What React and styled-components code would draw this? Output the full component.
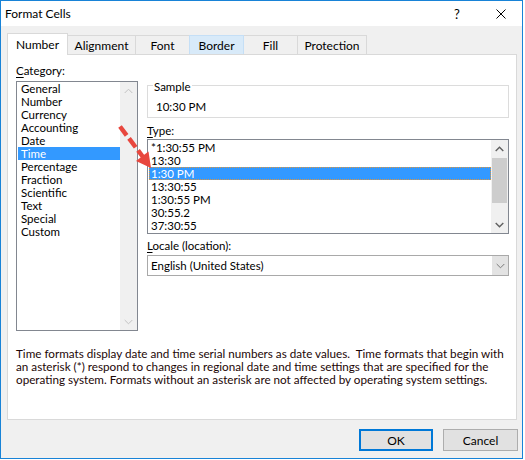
import React from "react";
import styled, { createGlobalStyle } from "styled-components";

const FONT = `Lato, "Noto Sans", "Liberation Sans", sans-serif`;

const Global = createGlobalStyle`
  html, body { margin: 0; padding: 0; background: #fff; }
  body { font-family: ${FONT}; }
`;

const Window = styled.div`
  position: relative;
  width: 523px;
  height: 459px;
  box-sizing: border-box;
  border: 1px solid #1883d7;
  background: #f0f0f0;
  display: flex;
  flex-direction: column;
  font-family: ${FONT};
  font-size: 11.5px;
  color: #000;
`;

const TitleBar = styled.div`
  height: 25px;
  flex: none;
  background: #fff;
  display: flex;
  align-items: center;
  padding-left: 4px;
`;

const Title = styled.div`
  flex: 1;
  font-size: 12px;
  line-height: 16px;
  color: #000;
`;

const TitleButton = styled.div`
  width: ${(p) => p.$w}px;
  height: 25px;
  display: flex;
  align-items: center;
  justify-content: center;
  font-size: 13px;
  color: #000;
`;

const Body = styled.div`
  flex: 1;
  display: flex;
  flex-direction: column;
  padding: 7px 4px 0 6px;
`;

const TabStrip = styled.div`
  display: flex;
  align-items: flex-end;
  height: 21px;
`;

const Tab = styled.div`
  position: relative;
  box-sizing: border-box;
  width: ${(p) => p.$w}px;
  height: ${(p) => (p.$active ? 22 : 19)}px;
  margin-bottom: ${(p) => (p.$active ? -1 : 0)}px;
  margin-left: ${(p) => (p.$first ? 0 : -1)}px;
  z-index: ${(p) => (p.$active ? 2 : p.$hover ? 1 : 0)};
  border: 1px solid ${(p) => (p.$hover ? "#c5dff6" : "#d9d9d9")};
  border-bottom: none;
  background: ${(p) => (p.$active ? "#fff" : p.$hover ? "#d8eaf9" : "#f0f0f0")};
  display: flex;
  align-items: center;
  justify-content: center;
  padding-top: ${(p) => (p.$active ? 0 : 1)}px;
  font-size: 12px;
  line-height: 14px;
  white-space: nowrap;
`;

const Panel = styled.div`
  box-sizing: border-box;
  width: 510px;
  height: 366px;
  border: 1px solid #d9d9d9;
  background: #fff;
  padding: 8px 7px 0 8px;
  display: flex;
  flex-direction: column;
`;

const Columns = styled.div`
  display: grid;
  grid-template-columns: 122px 362px;
  column-gap: 9px;
`;

const Column = styled.div`
  display: flex;
  flex-direction: column;
`;

const Label = styled.div`
  line-height: 15px;
  height: 15px;
  margin-top: ${(p) => p.$mt || 0}px;
  white-space: nowrap;
  u { text-decoration-thickness: 1px; text-underline-offset: 2px; }
`;

const ListBox = styled.div`
  box-sizing: border-box;
  height: ${(p) => p.$h}px;
  margin-top: ${(p) => p.$mt || 0}px;
  border: 1px solid #828790;
  background: #fff;
  display: flex;
`;

const Items = styled.div`
  flex: 1;
  min-width: 0;
  padding: ${(p) => p.$pt || 0}px 0 0 1px;
  display: flex;
  flex-direction: column;
`;

const Row = styled.div`
  box-sizing: border-box;
  height: 13px;
  line-height: 13px;
  padding-left: ${(p) => p.$pl}px;
  white-space: nowrap;
  background: ${(p) => (p.$selected ? "#3399ff" : "transparent")};
  color: ${(p) => (p.$selected ? "#fff" : "#000")};
  outline: ${(p) => (p.$focus ? "1px dotted #e0953a" : "none")};
  outline-offset: -1px;
`;

const ScrollBar = styled.div`
  width: 17px;
  flex: none;
  background: #f0f0f0;
  display: flex;
  flex-direction: column;
`;

const ScrollArrow = styled.div`
  height: 17px;
  flex: none;
  display: flex;
  align-items: center;
  justify-content: center;
`;

const Track = styled.div`
  flex: 1;
  display: flex;
  flex-direction: column;
`;

const Thumb = styled.div`
  height: ${(p) => p.$h}px;
  margin: ${(p) => p.$top}px 1px 0;
  background: #cdcdcd;
`;

const Group = styled.fieldset`
  margin: 13px 0 0;
  padding: 5px 8px 3px;
  border: 1px solid #dcdcdc;
  min-width: 0;
`;

const Legend = styled.legend`
  padding: 4px 1px 0;
  margin-left: -3px;
  line-height: 14px;
`;

const SampleValue = styled.div`
  line-height: 15px;
`;

const Combo = styled.div`
  box-sizing: border-box;
  height: 21px;
  margin-top: 2px;
  border: 1px solid #a9a9a9;
  background: #fff;
  display: flex;
`;

const ComboText = styled.div`
  flex: 1;
  padding-left: 3px;
  line-height: 19px;
  white-space: nowrap;
`;

const ComboButton = styled.div`
  width: 16px;
  background: #e3e3e3;
  display: flex;
  align-items: center;
  justify-content: center;
`;

const Description = styled.div`
  margin-top: 16px;
  font-size: 11.7px;
  line-height: 13px;
  white-space: pre;
  color: #1c0606;
`;

const ButtonRow = styled.div`
  display: flex;
  justify-content: flex-end;
  gap: 10px;
  margin-top: 9px;
`;

const Button = styled.div`
  box-sizing: border-box;
  width: ${(p) => p.$w}px;
  height: 22px;
  background: #e1e1e1;
  border: ${(p) => (p.$default ? "2px solid #0078d7" : "1px solid #adadad")};
  display: flex;
  align-items: center;
  justify-content: center;
  font-size: 12px;
  line-height: 15px;
`;

const Overlay = styled.svg`
  position: absolute;
  left: -1px;
  top: -1px;
  pointer-events: none;
`;

const Chevron = ({ up, color = "#606060", w = 1.4 }) => (
  <svg width="9" height="6" viewBox="0 0 9 6">
    <polyline
      points={up ? "0.7,5 4.5,1.2 8.3,5" : "0.7,1 4.5,4.8 8.3,1"}
      fill="none"
      stroke={color}
      strokeWidth={w}
    />
  </svg>
);

const categories = [
  "General",
  "Number",
  "Currency",
  "Accounting",
  "Date",
  "Time",
  "Percentage",
  "Fraction",
  "Scientific",
  "Text",
  "Special",
  "Custom",
];

const types = [
  "*1:30:55 PM",
  "13:30",
  "1:30 PM",
  "13:30:55",
  "1:30:55 PM",
  "30:55.2",
  "37:30:55",
];

const tabs = [
  { label: "Number", w: 61 },
  { label: "Alignment", w: 69 },
  { label: "Font", w: 55 },
  { label: "Border", w: 55 },
  { label: "Fill", w: 55 },
  { label: "Protection", w: 70 },
];

export default function App() {
  return (
    <>
      <Global />
      <Window>
        <TitleBar>
          <Title>Format Cells</Title>
          <TitleButton $w={46}>?</TitleButton>
          <TitleButton $w={42}>
            <svg width="10" height="10" viewBox="0 0 10 10">
              <path d="M0.5 0.5 L9.5 9.5 M9.5 0.5 L0.5 9.5" stroke="#000" strokeWidth="1" />
            </svg>
          </TitleButton>
        </TitleBar>
        <Body>
          <TabStrip>
            {tabs.map((t, i) => (
              <Tab
                key={t.label}
                $w={t.w}
                $first={i === 0}
                $active={i === 0}
                $hover={t.label === "Border"}
              >
                {t.label}
              </Tab>
            ))}
          </TabStrip>
          <Panel>
            <Columns>
              <Column>
                <Label>
                  <u>C</u>ategory:
                </Label>
                <ListBox $h={250} $mt={3}>
                  <Items>
                    {categories.map((c) => (
                      <Row key={c} $pl={3} $selected={c === "Time"}>
                        {c}
                      </Row>
                    ))}
                  </Items>
                  <ScrollBar>
                    <ScrollArrow>
                      <Chevron up color="#c2c2c2" w={1} />
                    </ScrollArrow>
                    <Track />
                    <ScrollArrow>
                      <Chevron color="#c2c2c2" w={1} />
                    </ScrollArrow>
                  </ScrollBar>
                </ListBox>
              </Column>
              <Column>
                <Group>
                  <Legend>Sample</Legend>
                  <SampleValue>10:30 PM</SampleValue>
                </Group>
                <Label $mt={5}>
                  <u>T</u>ype:
                </Label>
                <ListBox $h={95} $mt={1}>
                  <Items $pt={1}>
                    {types.map((t) => (
                      <Row
                        key={t}
                        $pl={2}
                        $selected={t === "1:30 PM"}
                        $focus={t === "1:30 PM"}
                      >
                        {t}
                      </Row>
                    ))}
                  </Items>
                  <ScrollBar>
                    <ScrollArrow>
                      <Chevron up />
                    </ScrollArrow>
                    <Track>
                      <Thumb $top={1} $h={45} />
                    </Track>
                    <ScrollArrow>
                      <Chevron />
                    </ScrollArrow>
                  </ScrollBar>
                </ListBox>
                <Label $mt={4}>
                  <u>L</u>ocale (location):
                </Label>
                <Combo>
                  <ComboText>English (United States)</ComboText>
                  <ComboButton>
                    <Chevron color="#7a7a7a" w={1} />
                  </ComboButton>
                </Combo>
              </Column>
            </Columns>
            <Description>
              {"Time formats display date and time serial numbers as date values.  Time formats that begin with\nan asterisk (*) respond to changes in regional date and time settings that are specified for the\noperating system. Formats without an asterisk are not affected by operating system settings."}
            </Description>
          </Panel>
          <ButtonRow>
            <Button $w={74} $default>
              OK
            </Button>
            <Button $w={75}>Cancel</Button>
          </ButtonRow>
        </Body>
        <Overlay width="525" height="460" viewBox="0 0 525 460">
          <line
            x1="120"
            y1="126.5"
            x2="143"
            y2="157"
            stroke="#e8473e"
            strokeWidth="4.5"
            strokeDasharray="11 4"
          />
          <polygon points="151,168 148.5,151.5 136,161" fill="#e8473e" />
        </Overlay>
      </Window>
    </>
  );
}
